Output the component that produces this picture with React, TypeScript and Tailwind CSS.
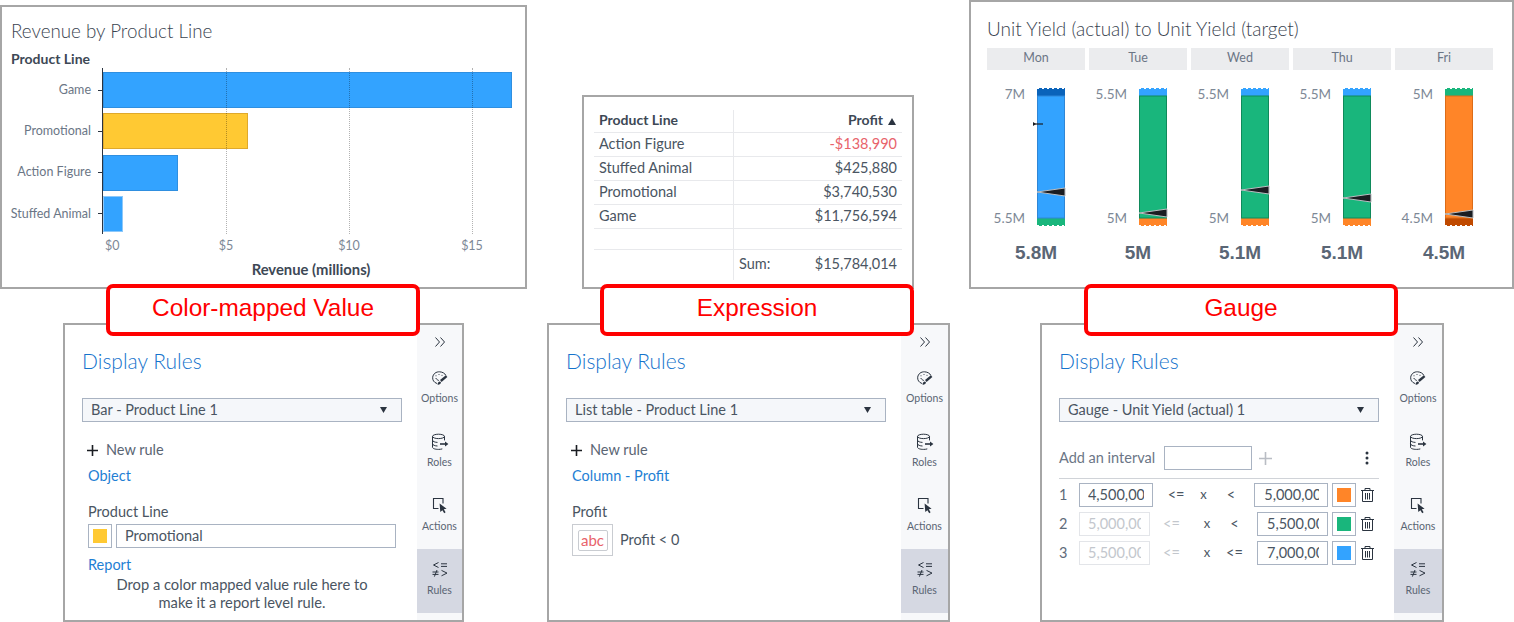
import type { ReactNode } from "react";

const FONT = "[font-family:Lato,'Open_Sans',sans-serif]";

const bars = [
  { name: "Game", value: 16.62, color: "bg-[#33a3ff] border-[#2f8fe0]" },
  { name: "Promotional", value: 5.9, color: "bg-[#ffc933] border-[#dfa92c]" },
  { name: "Action Figure", value: 3.05, color: "bg-[#33a3ff] border-[#2f8fe0]" },
  { name: "Stuffed Animal", value: 0.8, color: "bg-[#33a3ff] border-[#8cc8fa]" },
];

const profits = [
  { name: "Action Figure", profit: "-$138,990", red: true },
  { name: "Stuffed Animal", profit: "$425,880", red: false },
  { name: "Promotional", profit: "$3,740,530", red: false },
  { name: "Game", profit: "$11,756,594", red: false },
];

const BLUE = ["#33a3ff", "#2f86d6"];
const GREEN = ["#19b67c", "#0f8a5b"];
const ORANGE = ["#ff8528", "#dc6c18"];

const gauges = [
  { day: "Mon", top: "7M", bottom: "5.5M", value: "5.8M", marker: 104, target: 36, caps: ["#0a63ba", "#1ab67c"], main: BLUE },
  { day: "Tue", top: "5.5M", bottom: "5M", value: "5M", marker: 125, caps: ["#33a3ff", "#ff8528"], main: GREEN },
  { day: "Wed", top: "5.5M", bottom: "5M", value: "5.1M", marker: 102, caps: ["#33a3ff", "#ff8528"], main: GREEN },
  { day: "Thu", top: "5.5M", bottom: "5M", value: "5.1M", marker: 110, caps: ["#33a3ff", "#ff8528"], main: GREEN },
  { day: "Fri", top: "5M", bottom: "4.5M", value: "4.5M", marker: 126, caps: ["#19b67c", "#c04a00"], main: ORANGE },
];

function GaugeBar({ gauge }: { gauge: (typeof gauges)[number] }) {
  const y = gauge.marker;
  return (
    <svg width="28" height="138" viewBox="0 0 28 138" className="overflow-visible shrink-0">
      <rect x="0" y="0" width="28" height="8" fill={gauge.caps[0]} />
      <rect x="0" y="130" width="28" height="8" fill={gauge.caps[1]} />
      <rect x="0.5" y="8" width="27" height="122" fill={gauge.main[0]} stroke={gauge.main[1]} />
      <line x1="0" y1="0.5" x2="28" y2="0.5" stroke="#fff" strokeDasharray="2 3" />
      <line x1="0" y1="137.5" x2="28" y2="137.5" stroke="#fff" strokeDasharray="2 3" />
      <polygon points={`0,${y} 28,${y - 4} 28,${y + 4}`} fill="#1a1d22" stroke="#b9bcc0" strokeWidth="1" />
      {gauge.target && (
        <g>
          <line x1="-4" y1={gauge.target} x2="6" y2={gauge.target} stroke="#1a1d22" strokeWidth="1.2" />
          <polygon points={`-4,${gauge.target - 2} -1,${gauge.target} -4,${gauge.target + 2}`} fill="#1a1d22" />
        </g>
      )}
    </svg>
  );
}

function OptionsIcon() {
  return (
    <svg width="18" height="18" viewBox="0 0 18 18" fill="none" stroke="#2b3440" strokeWidth="1">
      <path d="M6 14.5C2.8 13.4 1.4 11 1.7 8.2 2.1 4.8 5.2 2.6 8.6 2.8c3 .2 5.4 1.6 6.2 3.6" />
      <path d="M4.6 9c1 1.3 2.2 2.2 3.2 2.5" />
      <circle cx="5" cy="6.8" r=".55" fill="#2b3440" stroke="none" />
      <circle cx="8" cy="5.5" r=".55" fill="#2b3440" stroke="none" />
      <circle cx="11" cy="6.2" r=".55" fill="#2b3440" stroke="none" />
      <path d="M9.8 12 15.6 7.2" strokeWidth="2.4" />
      <path d="M6.4 15.6c.2-1.8 1-2.9 2.7-3.1l.9 1c-.4 1.7-1.7 2.4-3.6 2.1Z" fill="#2b3440" stroke="none" />
    </svg>
  );
}

function RolesIcon() {
  return (
    <svg width="18" height="18" viewBox="0 0 18 18" fill="none" stroke="#2b3440" strokeWidth="1">
      <ellipse cx="7.5" cy="3.4" rx="6" ry="2.2" />
      <path d="M13.5 3.4v4M1.5 3.4v10.8c0 1.3 2.7 2.2 6 2.2 1.4 0 2.8-.2 3.8-.5" />
      <path d="M1.5 7.2c0 1.2 2.6 2.2 5 2.2M1.5 10.8c0 1.2 2.6 2.2 5 2.2" />
      <path d="M9 11h6" strokeWidth="1.6" />
      <path d="m14 8.4 3.4 2.6-3.4 2.6Z" fill="#2b3440" stroke="none" />
    </svg>
  );
}

function ActionsIcon() {
  return (
    <svg width="18" height="18" viewBox="0 0 18 18" fill="none" stroke="#2b3440" strokeWidth="1.1">
      <path d="M7.5 11.5H2.5V1.5h9.5v5" />
      <path d="m8.6 6.5 7 5.2-2.8.6 1.8 3-1.4.9-1.8-3-2.1 1.9Z" fill="#2b3440" stroke="none" />
    </svg>
  );
}

function RulesIcon() {
  return (
    <svg width="18" height="18" viewBox="0 0 18 18" fill="none" stroke="#2b3440" strokeWidth="1">
      <path d="M7.5 1.5 2.5 4l5 2.5" />
      <path d="M10 2.8h6M10 5.4h6" />
      <path d="M1.5 11h6M1.5 13.4h6M6 9l-2.6 6.6" />
      <path d="m10.5 9.4 5.5 2.7-5.5 2.7" />
    </svg>
  );
}

function Rail() {
  const items = [
    { label: "Options", icon: <OptionsIcon /> },
    { label: "Roles", icon: <RolesIcon /> },
    { label: "Actions", icon: <ActionsIcon /> },
    { label: "Rules", icon: <RulesIcon />, active: true },
  ];
  return (
    <div className="flex-1 bg-[#f7f8fa] flex flex-col">
      <div className="h-[32px] flex items-center justify-center pt-[1px]">
        <svg width="12" height="10" viewBox="0 0 12 10" fill="none" stroke="#2b3440" strokeWidth="1">
          <path d="m1.5 .5 4 4.5-4 4.5M6.5 .5l4 4.5-4 4.5" />
        </svg>
      </div>
      {items.map((item) => (
        <div
          key={item.label}
          className={`h-[64px] flex flex-col items-center pt-[12px] gap-[4px] text-[10.5px] leading-[14px] text-[#5a6573] ${item.active ? "bg-[#d5d8e2]" : ""}`}
        >
          {item.icon}
          <span>{item.label}</span>
        </div>
      ))}
    </div>
  );
}

function RulesPanel({ select, children, className }: { select: string; children: ReactNode; className: string }) {
  return (
    <div className={`h-[299px] border-2 border-[#a6a6a6] bg-white flex overflow-hidden ${className}`}>
      <div className="w-[352px] shrink-0 pl-[17px] pt-[24px]">
        <div className="text-[21px] leading-[24px] font-light text-[#1573cc]">Display Rules</div>
        <div className="mt-[25px] w-[320px] h-[24px] border border-[#a9b3c2] bg-[#f5f7fa] flex items-center pl-[8px] pr-[14px] text-[14.5px] text-[#4a5562]">
          <span>{select}</span>
          <svg width="7" height="6" viewBox="0 0 7 6" className="ml-auto">
            <polygon points="0,0 7,0 3.5,6" fill="#2b3440" />
          </svg>
        </div>
        {children}
      </div>
      <Rail />
    </div>
  );
}

function NewRule() {
  return (
    <div className="mt-[18px] pl-[5px] h-[20px] flex items-center gap-[8px] text-[14.5px] text-[#5a6573]">
      <svg width="11" height="11" viewBox="0 0 11 11" stroke="#1a1d22" strokeWidth="1.6">
        <path d="M5.5 0v11M0 5.5h11" />
      </svg>
      <span>New rule</span>
    </div>
  );
}

function Swatch({ color }: { color: string }) {
  return (
    <div className="w-[24px] h-[24px] border border-[#a9b3c2] shrink-0 flex items-center justify-center">
      <div className={`w-[14px] h-[14px] ${color}`} />
    </div>
  );
}

function Trash() {
  return (
    <svg width="13" height="14" viewBox="0 0 13 14" fill="none" stroke="#2b3440" strokeWidth="1" className="shrink-0">
      <path d="M0 2.5h13M4 2.5V.5h5v2M1.5 2.5v11h10v-11M4.5 5v6.5M6.5 5v6.5M8.5 5v6.5" />
    </svg>
  );
}

const intervals = [
  { n: "1", from: "4,500,000", to: "5,000,000", off: false, op: "<", color: "bg-[#ff8528]" },
  { n: "2", from: "5,000,000", to: "5,500,000", off: true, op: "<", color: "bg-[#19b67c]" },
  { n: "3", from: "5,500,000", to: "7,000,000", off: true, op: "<=", color: "bg-[#33a3ff]" },
];

function IntervalRow({ row }: { row: (typeof intervals)[number] }) {
  return (
    <div className="h-[24px] flex items-center text-[14.5px] text-[#4a5562]">
      <span className="w-[20px] text-[#5f6b7a]">{row.n}</span>
      <div
        className={`h-[24px] border pl-[8px] pr-[8px] flex items-center overflow-hidden whitespace-nowrap ${
          row.off ? "w-[71px] border-[#e3e5e9] text-[#c3c7cd]" : "w-[74px] border-[#a9b3c2]"
        }`}
      >
        <span className="block overflow-hidden">{row.from}</span>
      </div>
      <span className={`text-center ${row.off ? "w-[43px] text-[#c3c7cd]" : "w-[47px]"}`}>{"<="}</span>
      <span className={`text-center text-[13px] ${row.off ? "w-[28px]" : "w-[8px]"}`}>x</span>
      <span className={`text-center whitespace-nowrap ${row.off ? "w-[27px]" : "w-[47px]"}`}>{row.op}</span>
      <div className={`ml-auto h-[24px] border border-[#a9b3c2] pl-[9px] pr-[8px] flex items-center overflow-hidden whitespace-nowrap ${row.off ? "w-[71px]" : "w-[74px]"}`}>
        <span className="block overflow-hidden">{row.to}</span>
      </div>
      <div className="ml-[4px]">
        <Swatch color={row.color} />
      </div>
      <div className="ml-[5px] mr-[5px]">
        <Trash />
      </div>
    </div>
  );
}

function CalloutLabel({ text, className }: { text: string; className: string }) {
  return (
    <div
      className={`absolute top-[284px] w-[314px] h-[52px] bg-white border-[4px] border-[#ff0000] rounded-[7px] pb-[3px] flex items-center justify-center text-[24.4px] text-[#ff0000] [font-family:'Liberation_Sans',Arial,sans-serif] ${className}`}
    >
      {text}
    </div>
  );
}

export default function App() {
  return (
    <div className={`relative w-[1514px] h-[622px] overflow-hidden bg-white flex ${FONT}`}>
      {/* Color-mapped value */}
      <div className="w-[527px] shrink-0">
        <div className="mt-[5px] h-[284px] border-2 border-[#a6a6a6] pt-[12px] pl-[9px]">
          <div className="text-[18.8px] leading-[24px] font-light text-[#3a4450]">Revenue by Product Line</div>
          <div className="mt-[7px] text-[14px] leading-[18px] font-bold text-[#3d4855]">Product Line</div>
          <div className="relative -ml-[9px] pt-[4px] pb-[2px]">
            <div className="absolute left-[100px] top-0 bottom-0 w-[1px] bg-[#2b3440]" />
            {[224, 347, 470].map((x) => (
              <div key={x} style={{ left: x }} className="absolute top-0 bottom-0 z-10 border-l border-dotted border-black/30" />
            ))}
            <div className="flex flex-col gap-[5.33px]">
              {bars.map((bar) => (
                <div key={bar.name} className="h-[36px] flex items-center">
                  <span className="w-[89px] text-right text-[12.5px] text-[#6b7686] whitespace-nowrap">{bar.name}</span>
                  <span className="ml-[7px] w-[4px] h-[1px] bg-[#2b3440]" />
                  <div style={{ width: bar.value * 24.6 }} className={`h-[36px] ml-[1px] border ${bar.color}`} />
                </div>
              ))}
            </div>
          </div>
          <div className="-ml-[9px] pl-[100px] mt-[4px] flex text-[12.5px] leading-[16px] text-[#7d8896]">
            <span className="w-[94px] pl-[3px]">$0</span>
            <span className="w-[60px] text-center">$5</span>
            <span className="w-[60px] ml-[63px] text-center">$10</span>
            <span className="w-[60px] ml-[63px] text-center">$15</span>
          </div>
          <div className="-ml-[9px] pl-[100px] mt-[6px] w-[518px] text-center text-[14.8px] leading-[18px] font-bold text-[#3d4855]">
            Revenue (millions)
          </div>
        </div>
        <RulesPanel select="Bar - Product Line 1" className="mt-[34px] ml-[63px] w-[401px]">
          <NewRule />
          <div className="pl-[6px] mt-[6px]">
            <div className="text-[14.5px] leading-[20px] text-[#1f7fd4]">Object</div>
            <div className="mt-[16px] text-[14.5px] leading-[20px] text-[#4a5562]">Product Line</div>
            <div className="mt-[2px] flex gap-[4px]">
              <Swatch color="bg-[#ffc933]" />
              <div className="w-[280px] h-[24px] border border-[#a9b3c2] pl-[8px] flex items-center text-[14.5px] text-[#4a5562]">Promotional</div>
            </div>
            <div className="mt-[7px] text-[14.5px] leading-[20px] text-[#1f7fd4]">Report</div>
            <div className="w-[308px] text-center text-[14.7px] leading-[18px] text-[#4a5562]">
              Drop a color mapped value rule here to
              <br />
              make it a report level rule.
            </div>
          </div>
        </RulesPanel>
      </div>

      {/* Expression */}
      <div className="w-[403px] ml-[20px] shrink-0">
        <div className="mt-[95px] ml-[35px] w-[332px] h-[194px] border-2 border-[#a6a6a6] pt-[13px] pl-[10px]">
          <div className="w-[308px] text-[14.5px] text-[#4a5562]">
            <div className="grid grid-cols-[140px_1fr] h-[23px] leading-[20px] border-b border-[#e8e9ec] font-bold text-[14px] text-[#3d4855]">
              <div className="pl-[5px] border-r border-[#e8e9ec]">Product Line</div>
              <div className="pr-[6px] flex items-start justify-end gap-[5px]">
                <span>Profit</span>
                <svg width="8" height="7" viewBox="0 0 8 7" className="mt-[8px]">
                  <polygon points="4,0 8,7 0,7" fill="#2b3440" />
                </svg>
              </div>
            </div>
            {profits.map((row) => (
              <div key={row.name} className="grid grid-cols-[140px_1fr] h-[24px] leading-[21px] border-b border-[#e8e9ec]">
                <div className="pl-[5px] border-r border-[#e8e9ec]">{row.name}</div>
                <div className={`pr-[5px] text-right ${row.red ? "text-[#e8636b]" : ""}`}>{row.profit}</div>
              </div>
            ))}
            <div className="grid grid-cols-[140px_1fr] h-[21px] border-b border-[#e8e9ec]">
              <div className="border-r border-[#e8e9ec]" />
            </div>
            <div className="grid grid-cols-[140px_1fr] h-[30px] leading-[27px]">
              <div className="border-r border-[#e8e9ec]" />
              <div className="pl-[5px] pr-[5px] flex justify-between">
                <span>Sum:</span>
                <span>$15,784,014</span>
              </div>
            </div>
          </div>
        </div>
        <RulesPanel select="List table - Product Line 1" className="mt-[34px] w-[403px]">
          <NewRule />
          <div className="pl-[6px] mt-[6px]">
            <div className="text-[14.5px] leading-[20px] text-[#1f7fd4]">Column - Profit</div>
            <div className="mt-[16px] text-[14.5px] leading-[20px] text-[#4a5562]">Profit</div>
            <div className="mt-[2px] flex items-center gap-[7px] text-[14.5px] text-[#4a5562]">
              <div className="w-[41px] h-[32px] border border-[#c9ccd1] flex items-center justify-center">
                <div className="w-[30px] h-[21px] border border-[#c9ccd1] rounded-[2px] flex items-center justify-center text-[#e8636b] text-[15px] leading-none">abc</div>
              </div>
              <span>Profit &lt; 0</span>
            </div>
          </div>
        </RulesPanel>
      </div>

      {/* Gauge */}
      <div className="w-[545px] ml-[19px] shrink-0">
        <div className="w-[545px] h-[289px] border-2 border-[#a6a6a6] pt-[15px] pl-[16px]">
          <div className="text-[19px] leading-[24px] font-light text-[#3a4450]">Unit Yield (actual) to Unit Yield (target)</div>
          <div className="mt-[7px] flex gap-[4px]">
            {gauges.map((gauge) => (
              <div key={gauge.day} className="w-[98px]">
                <div className="h-[22px] bg-[#ebecee] text-center text-[12.5px] leading-[20px] text-[#6b7686]">{gauge.day}</div>
                <div className="mt-[18px] flex">
                  <div className="w-[38px] h-[140px] -mt-[2px] flex flex-col justify-between text-right text-[13.5px] leading-[16px] text-[#7d8896]">
                    <span>{gauge.top}</span>
                    <span>{gauge.bottom}</span>
                  </div>
                  <div className="ml-[12px]">
                    <GaugeBar gauge={gauge} />
                  </div>
                </div>
                <div className="mt-[15px] text-center text-[19px] leading-[24px] font-bold text-[#5a6675] [font-family:'Liberation_Sans',Arial,sans-serif]">{gauge.value}</div>
              </div>
            ))}
          </div>
        </div>
        <RulesPanel select="Gauge - Unit Yield (actual) 1" className="mt-[34px] ml-[71px] w-[404px]">
          <div className="w-[320px] mt-[24px] flex items-center h-[24px] text-[14.5px] text-[#6b7686]">
            <span className="w-[105px] whitespace-nowrap">Add an interval</span>
            <div className="w-[88px] h-[24px] border border-[#a9b3c2]" />
            <svg width="13" height="13" viewBox="0 0 13 13" stroke="#b9bdc4" strokeWidth="1.6" className="ml-[7px]">
              <path d="M6.5 0v13M0 6.5h13" />
            </svg>
            <svg width="4" height="14" viewBox="0 0 4 14" className="ml-auto mr-[10px]" fill="#2b3440">
              <circle cx="2" cy="2" r="1.5" />
              <circle cx="2" cy="7" r="1.5" />
              <circle cx="2" cy="12" r="1.5" />
            </svg>
          </div>
          <div className="w-[320px] mt-[8px] pt-[4px] border-t border-[#d0d3d8] flex flex-col gap-[5px]">
            {intervals.map((row) => (
              <IntervalRow key={row.n} row={row} />
            ))}
          </div>
        </RulesPanel>
      </div>

      <CalloutLabel text="Color-mapped Value" className="left-[106px]" />
      <CalloutLabel text="Expression" className="left-[600px]" />
      <CalloutLabel text="Gauge" className="left-[1084px]" />
    </div>
  );
}
